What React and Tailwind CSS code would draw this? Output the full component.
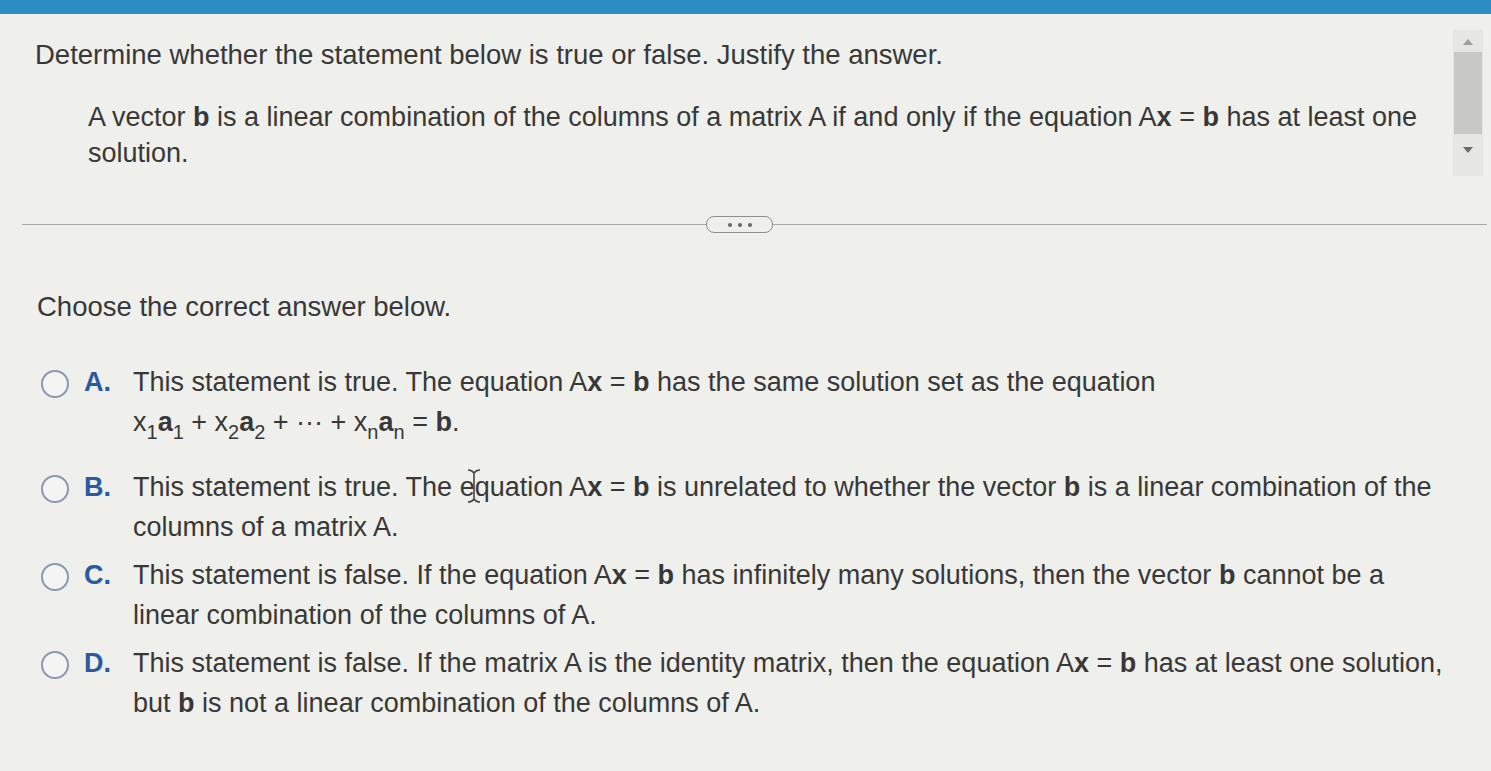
import React from 'react';

const B = ({ children }) => <span className="font-bold">{children}</span>;
const Sub = ({ children }) => <sub className="text-[20px] bottom-[-0.4em]">{children}</sub>;

function Radio() {
    return <span className="inline-block w-[28px] h-[28px] rounded-full border-[2.5px] border-[#8b98b3] bg-[#f4f4f2] shrink-0" />;
}

function Option({ letter, className = '', children }) {
    return (
        <div className={`flex items-start ${className}`}>
            <div className="w-[38px] flex justify-center pt-[8px] ml-[36px]"><Radio /></div>
            <div className="w-[59px] pl-[10px] font-bold text-[#2b5aa5]">{letter}.</div>
            <div className="flex-1 pr-[38px]">{children}</div>
        </div>
    );
}

export default function App() {
    return (
        <div className="w-[1491px] h-[771px] overflow-hidden bg-[#efefeb] text-[#383838] font-['Liberation_Sans',Arial,sans-serif]">
            <div className="h-[14px] bg-[#2e8dc0]" />

            {/* question box */}
            <div className="flex h-[180px]">
                <div className="flex-1 pl-[35px] pt-[24px] pr-[8px]">
                    <p className="text-[27.5px] leading-[34px]">Determine whether the statement below is true or false. Justify the answer.</p>
                    <p className="mt-[27px] ml-[53px] text-[27px] leading-[36px]">
                        A vector <B>b</B> is a linear combination of the columns of a matrix A if and only if the equation A<B>x</B> = <B>b</B> has at least one solution.
                    </p>
                </div>
                <div className="w-[30px] mr-[8px] mt-[16px] h-[146px] bg-[#e6e6e2] flex flex-col items-center">
                    <svg width="12" height="8" viewBox="0 0 12 8" className="mt-[8px]"><path d="M6 1 L11 7 L1 7 Z" fill="#a0a0a0" /></svg>
                    <div className="mt-[6px] w-[28px] h-[82px] bg-[#c8c8c4]" />
                    <svg width="12" height="8" viewBox="0 0 12 8" className="mt-[12px]"><path d="M1 1 L11 1 L6 7 Z" fill="#6a6a6a" /></svg>
                </div>
            </div>

            {/* divider */}
            <div className="flex items-center pl-[22px] pr-[4px] mt-[22px]">
                <div className="w-[684px] h-px bg-[#a9a9a5]" />
                <div className="w-[67px] h-[17px] rounded-[8px] border border-[#8e8e8a] flex items-center justify-center gap-[6px]">
                    <span className="w-[4px] h-[4px] rounded-full bg-[#666]" />
                    <span className="w-[4px] h-[4px] rounded-full bg-[#666]" />
                    <span className="w-[4px] h-[4px] rounded-full bg-[#666]" />
                </div>
                <div className="flex-1 h-px bg-[#a9a9a5]" />
            </div>

            <p className="mt-[57px] ml-[37px] text-[27.5px] leading-[34px]">Choose the correct answer below.</p>

            <div className="mt-[38px] flex flex-col gap-[8px] text-[27px] leading-[40px]">
                <Option letter="A" className="pb-[17px]">
                    This statement is true. The equation A<B>x</B> = <B>b</B> has the same solution set as the equation
                    <br />
                    x<Sub>1</Sub><B>a</B><Sub>1</Sub> + x<Sub>2</Sub><B>a</B><Sub>2</Sub> + ··· + x<Sub>n</Sub><B>a</B><Sub>n</Sub> = <B>b</B>.
                </Option>
                <Option letter="B">
                    <span className="relative">
                        This statement is true. The equation A<B>x</B> = <B>b</B> is unrelated to whether the vector <B>b</B> is a linear combination of the columns of a matrix A.
                        <svg width="18" height="36" viewBox="0 0 18 36" className="absolute left-[332px] top-[-4px]">
                            <path d="M3 2 Q7 2 9 5 Q11 2 15 2 M9 5 V31 M3 34 Q7 34 9 31 Q11 34 15 34" stroke="#444" strokeWidth="1.6" fill="none" />
                        </svg>
                    </span>
                </Option>
                <Option letter="C">
                    This statement is false. If the equation A<B>x</B> = <B>b</B> has infinitely many solutions, then the vector <B>b</B> cannot be a linear combination of the columns of A.
                </Option>
                <Option letter="D">
                    This statement is false. If the matrix A is the identity matrix, then the equation A<B>x</B> = <B>b</B> has at least one solution, but <B>b</B> is not a linear combination of the columns of A.
                </Option>
            </div>
        </div>
    );
}
